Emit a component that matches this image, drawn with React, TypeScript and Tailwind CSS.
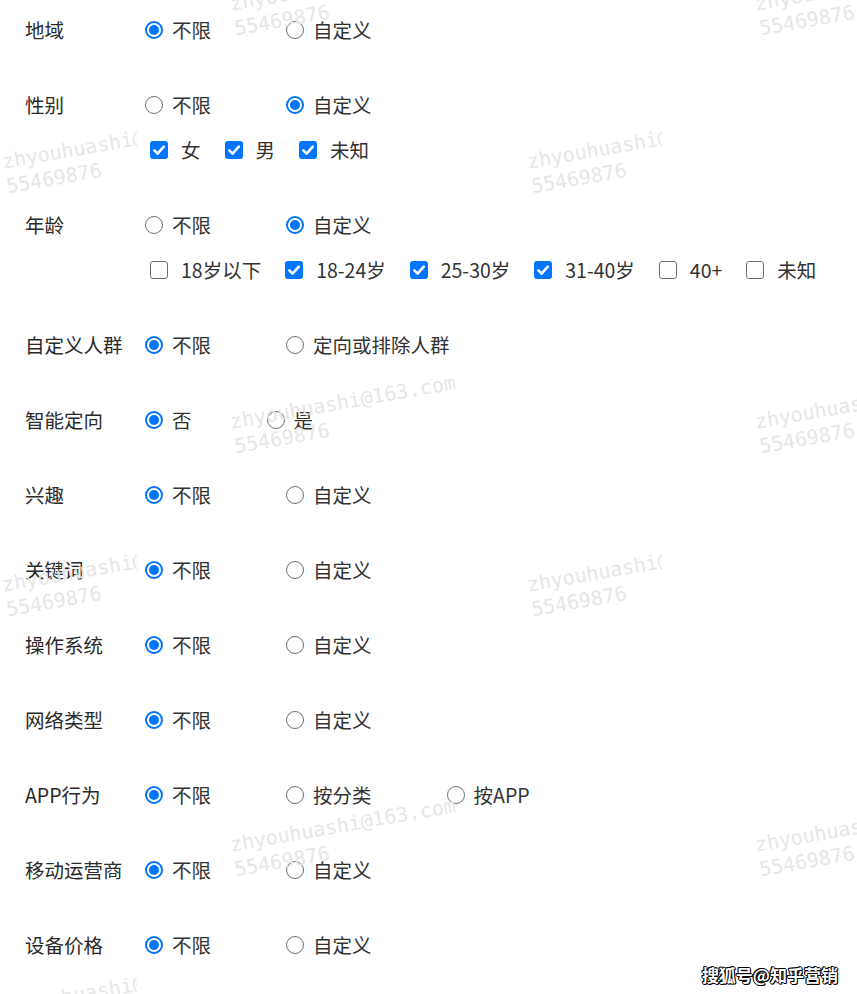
import React from 'react';

type Group = {
  label: string;
  options: string[];
  selected: number;
  checks?: [string, boolean][];
};

const groups: Group[] = [
  { label: '地域', options: ['不限', '自定义'], selected: 0 },
  {
    label: '性别',
    options: ['不限', '自定义'],
    selected: 1,
    checks: [
      ['女', true],
      ['男', true],
      ['未知', true],
    ],
  },
  {
    label: '年龄',
    options: ['不限', '自定义'],
    selected: 1,
    checks: [
      ['18岁以下', false],
      ['18-24岁', true],
      ['25-30岁', true],
      ['31-40岁', true],
      ['40+', false],
      ['未知', false],
    ],
  },
  { label: '自定义人群', options: ['不限', '定向或排除人群'], selected: 0 },
  { label: '智能定向', options: ['否', '是'], selected: 0 },
  { label: '兴趣', options: ['不限', '自定义'], selected: 0 },
  { label: '关键词', options: ['不限', '自定义'], selected: 0 },
  { label: '操作系统', options: ['不限', '自定义'], selected: 0 },
  { label: '网络类型', options: ['不限', '自定义'], selected: 0 },
  { label: 'APP行为', options: ['不限', '按分类', '按APP'], selected: 0 },
  { label: '移动运营商', options: ['不限', '自定义'], selected: 0 },
  { label: '设备价格', options: ['不限', '自定义'], selected: 0 },
];

// watermark tiles: [left, top, clipped]
const marks: [number, number, boolean][] = [
  [0, 150, true],
  [0, 573, true],
  [0, 996, true],
  [228, -8, false],
  [228, 410, false],
  [228, 833, false],
  [525, 150, true],
  [525, 573, true],
  [753, -8, false],
  [753, 410, false],
  [753, 833, false],
];

function Radio({ checked }: { checked: boolean }) {
  if (checked) {
    return (
      <span className="flex h-[18px] w-[18px] shrink-0 items-center justify-center rounded-full border-2 border-[#0075ff] bg-white">
        <span className="h-[10px] w-[10px] rounded-full bg-[#0075ff]" />
      </span>
    );
  }
  return <span className="h-[18px] w-[18px] shrink-0 rounded-full border-[1.5px] border-[#6f6f6f] bg-white" />;
}

function Checkbox({ checked }: { checked: boolean }) {
  if (checked) {
    return (
      <span className="flex h-[18px] w-[18px] shrink-0 items-center justify-center rounded-[3px] bg-[#0075ff]">
        <svg viewBox="0 0 18 18" className="h-[18px] w-[18px]" aria-hidden="true">
          <path d="M4.3 9.3 L7.6 12.6 L13.8 5.6" fill="none" stroke="#fff" strokeWidth="2.6" strokeLinecap="round" strokeLinejoin="round" />
        </svg>
      </span>
    );
  }
  return <span className="h-[18px] w-[18px] shrink-0 rounded-[3px] border-[1.5px] border-[#6f6f6f] bg-white" />;
}

function Watermark({ left, top, clipped }: { left: number; top: number; clipped: boolean }) {
  return (
    <div
      className="pointer-events-none absolute overflow-hidden"
      style={{ left, top: top - 50, width: clipped ? 137 : 320, height: 140 }}
    >
      <div className="absolute left-0 top-[50px] origin-top-left -rotate-[10deg] whitespace-nowrap font-['DejaVu_Sans_Mono',monospace] text-[20px] leading-[25px] text-[#e6e6e6]">
        <div>zhyouhuashi@163.com</div>
        <div>55469876</div>
      </div>
    </div>
  );
}

export default function App() {
  return (
    <div className="relative min-h-[994px] w-full overflow-hidden bg-white font-['Noto_Sans_CJK_SC','Noto_Sans',sans-serif] text-[19.5px] text-[#333]">
      <div className="flex flex-col gap-[45px] pl-[25px] pt-[15px]">
        {groups.map((g) => (
          <div key={g.label} className="flex flex-col gap-[15px]">
            <div className="flex h-[30px] items-center">
              <div className="w-[120px] shrink-0 text-[#2a2a2a]">{g.label}</div>
              {g.options.map((o, i) => (
                <label key={o} className="mr-[75px] flex items-center gap-[9px]">
                  <Radio checked={i === g.selected} />
                  <span>{o}</span>
                </label>
              ))}
            </div>
            {g.checks && (
              <div className="ml-[125px] flex h-[30px] items-center">
                {g.checks.map(([c, on]) => (
                  <label key={c} className="mr-[24px] flex items-center gap-[13px]">
                    <Checkbox checked={on} />
                    <span>{c}</span>
                  </label>
                ))}
              </div>
            )}
          </div>
        ))}
      </div>

      {marks.map(([l, t, c], i) => (
        <Watermark key={i} left={l} top={t} clipped={c} />
      ))}

      <div className="pointer-events-none absolute right-[19px] top-[962px] text-[17px] font-bold text-white [text-shadow:1px_0_0_#000,-1px_0_0_#000,0_1px_0_#000,0_-1px_0_#000,1px_1px_0_#000,-1px_-1px_0_#000]">
        搜狐号@知乎营销
      </div>
    </div>
  );
}
